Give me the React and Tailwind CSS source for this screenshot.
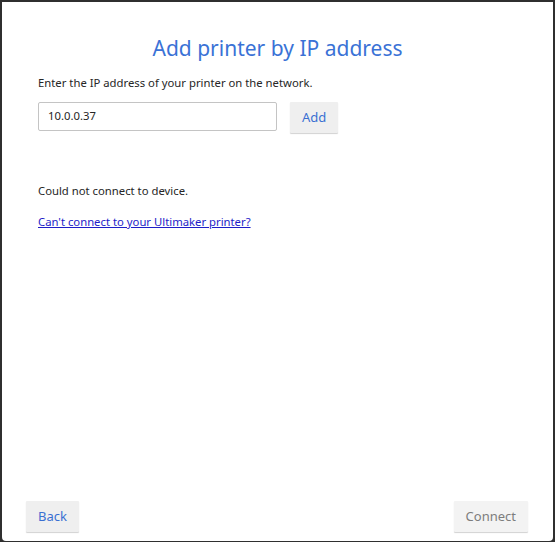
import React from "react";

const font = { fontFamily: '"Noto Sans", "Open Sans", sans-serif' };

function FlatButton({ children, muted = false }) {
  return (
    <button
      type="button"
      className={
        muted
          ? "h-[31px] px-[12px] bg-[#f3f3f3] text-[13px] text-[#7d7d7d] shadow-[0_1px_1px_rgba(0,0,0,0.18)] rounded-[1px]"
          : "h-[31px] px-[12px] bg-[#efefef] text-[13px] text-[#3a6fd2] shadow-[0_1px_1px_rgba(0,0,0,0.18)] rounded-[1px]"
      }
    >
      {children}
    </button>
  );
}

export default function App() {
  return (
    <div
      className="w-[555px] h-[542px] bg-[#2f2f2f] pt-[2px] px-[2px] pb-[1px]"
      style={font}
    >
      <div className="h-full bg-white rounded-b-[4px] flex flex-col">
        <h1 className="mt-[31px] text-center text-[21px] leading-[30px] text-[#3a72d6]">
          Add printer by IP address
        </h1>

        <div className="pl-[36px] pr-[36px]">
          <p className="mt-[12px] text-[11.3px] leading-[16px] text-[#262626]">
            Enter the IP address of your printer on the network.
          </p>

          <div className="mt-[11px] flex items-start gap-[13px]">
            <div className="w-[239px] h-[29px] border border-[#c4c4c4] rounded-[2px] flex items-center pl-[9px] text-[11.3px] text-[#262626]">
              10.0.0.37
            </div>
            <FlatButton>Add</FlatButton>
          </div>

          <p className="mt-[50px] text-[11.3px] leading-[16px] text-[#262626]">
            Could not connect to device.
          </p>

          <a
            href="#"
            className="block mt-[15px] text-[11.3px] leading-[16px] text-[#1e1ec8] underline"
          >
            Can't connect to your Ultimaker printer?
          </a>
        </div>

        <div className="flex-1" />

        <div className="flex justify-between pl-[24px] pr-[25px] pb-[9px]">
          <FlatButton>Back</FlatButton>
          <FlatButton muted>Connect</FlatButton>
        </div>
      </div>
    </div>
  );
}
